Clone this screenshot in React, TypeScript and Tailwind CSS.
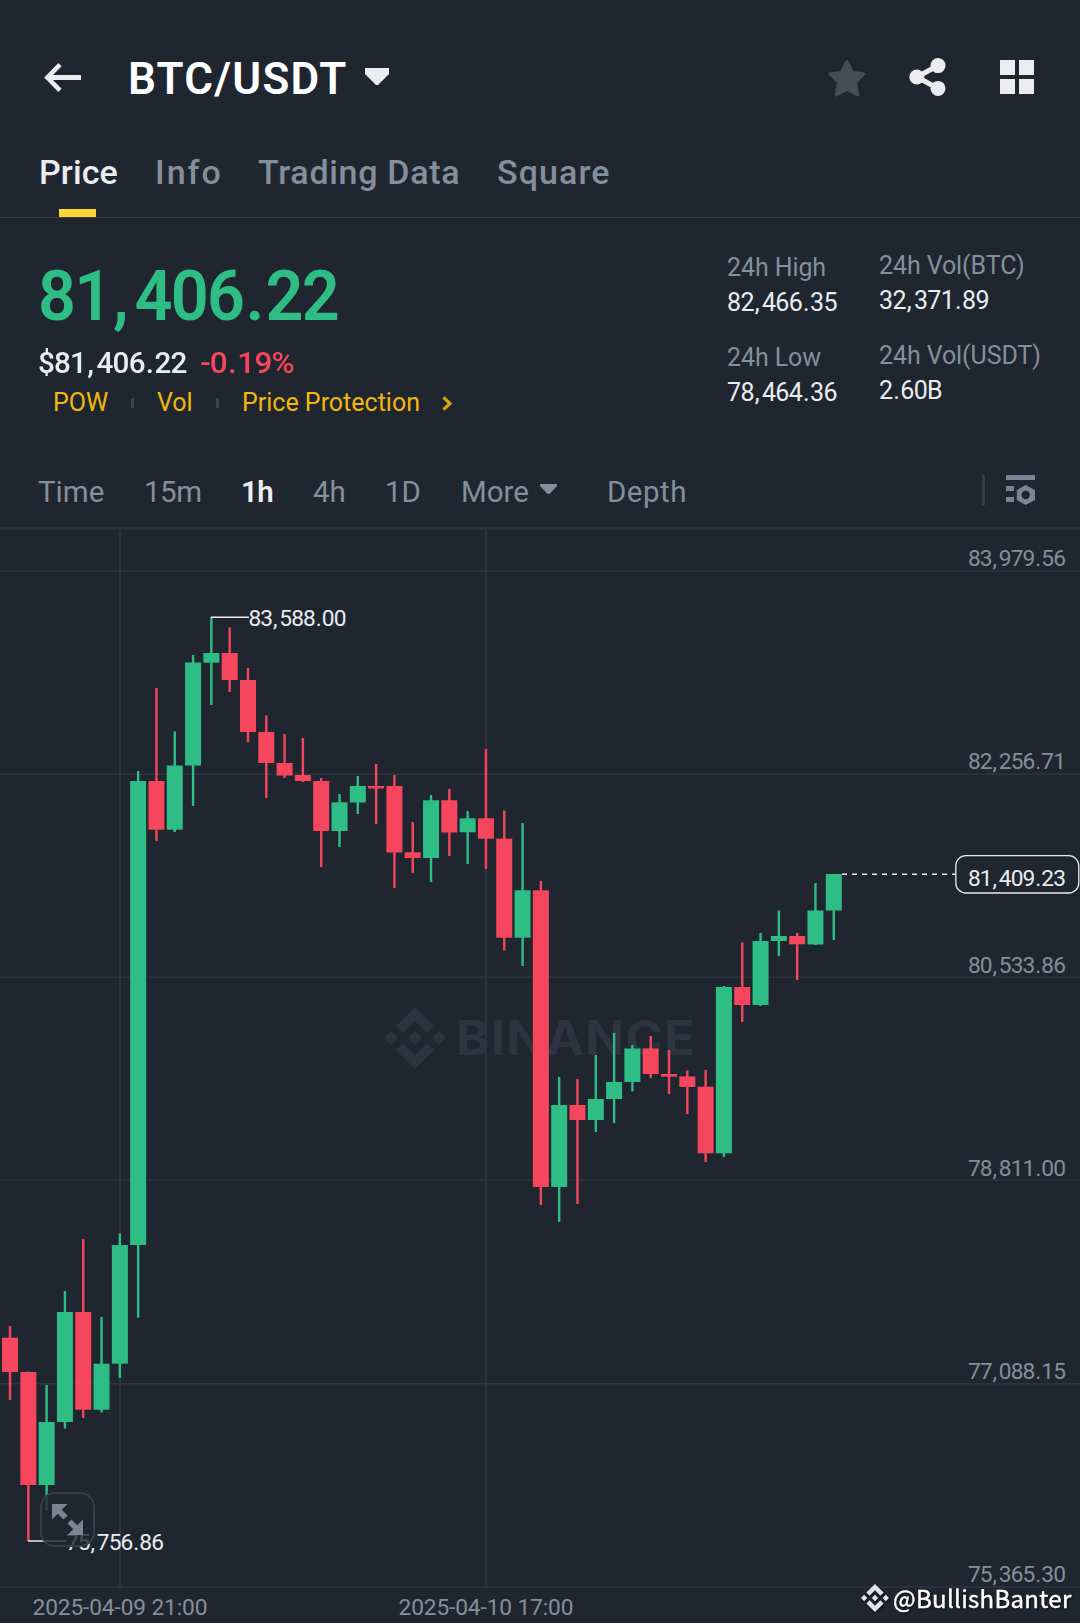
import React from "react";

type Candle = [up: 0 | 1, high: number, top: number, bottom: number, low: number];

const candles: Candle[] = [
  [0, 1326, 1337.7, 1372, 1400],
  [0, 1371.5, 1372, 1485, 1541],
  [1, 1385, 1422, 1485, 1511],
  [1, 1291, 1312, 1422, 1428.5],
  [0, 1239, 1312, 1409.7, 1418],
  [1, 1317, 1363.7, 1409.7, 1412.5],
  [1, 1233.5, 1245, 1363.7, 1378],
  [1, 771, 781, 1245, 1317.7],
  [0, 688, 781, 829.7, 841],
  [1, 731.5, 765.5, 829.7, 832],
  [1, 655, 662.5, 765.5, 806],
  [1, 617, 653, 662.7, 705],
  [0, 627.5, 653, 680, 692],
  [0, 668, 680, 732, 742],
  [0, 715.5, 732, 763, 798],
  [0, 734, 763, 775.5, 778],
  [0, 738, 775, 781, 782],
  [0, 778, 781, 831, 867],
  [1, 794, 802.3, 831, 847],
  [1, 776, 786, 802.5, 814],
  [0, 764, 786, 788.5, 824],
  [0, 775, 786, 852.5, 888],
  [0, 822, 852.3, 858, 873],
  [1, 795, 800.3, 858, 882],
  [0, 789, 800.3, 832.5, 856],
  [1, 811, 818.3, 832.3, 864],
  [0, 749, 818.3, 838.7, 869],
  [0, 810.5, 838.7, 937.7, 950.5],
  [1, 823, 890.3, 937.7, 966],
  [0, 881, 890.3, 1187, 1205],
  [1, 1077, 1105, 1187, 1222],
  [0, 1079, 1105, 1120, 1204],
  [1, 1055, 1099, 1120, 1132],
  [1, 1033, 1082, 1099, 1123],
  [1, 1045, 1048.5, 1082, 1091.5],
  [0, 1036, 1048.5, 1074, 1078],
  [0, 1050, 1074, 1076.7, 1094],
  [0, 1070.5, 1076.5, 1087, 1114],
  [0, 1070, 1086.7, 1153.3, 1162],
  [1, 986, 987, 1153.3, 1157],
  [0, 942.5, 987, 1005, 1022],
  [1, 933, 941, 1005, 1006],
  [1, 910.5, 936, 941, 956],
  [0, 933, 936, 944.3, 980],
  [1, 883, 910.5, 944.5, 945],
  [1, 874, 874, 910.5, 940],
];

const levels: [y: number, baseline: number, label: string][] = [
  [571.3, 566, "83,979.56"],
  [774.3, 769, "82,256.71"],
  [977.3, 973, "80,533.86"],
  [1180.3, 1176, "78,811.00"],
  [1383.7, 1379, "77,088.15"],
  [1587, 1582, "75,365.30"],
];

/* Figures set narrow, with roomy separators. */
function Num({ children }: { children: string }) {
  return (
    <span className="tracking-[-0.027em]">
      {children.split("").map((c, i) =>
        c === "," ? (
          <span key={i} className="ml-[0.04em] mr-[0.115em]">,</span>
        ) : c === "." ? (
          <span key={i} className="ml-[0.035em] mr-[0.045em]">.</span>
        ) : (
          c
        ),
      )}
    </span>
  );
}

function ChartNum({ x, y, fill, children }: { x: number; y: number; fill: string; children: string }) {
  const size = 22.7;
  const dx = children.split("").map((c, i) => {
    const prev = children[i - 1];
    let d = i === 0 ? 0 : -0.04;
    if (c === ",") d += 0.04;
    if (c === ".") d += 0.04;
    if (prev === ",") d += 0.115;
    if (prev === ".") d += 0.045;
    return (d * size).toFixed(2);
  });
  return (
    <text x={x} y={y} dx={dx.join(" ")} fontSize={size} fill={fill}>
      {children}
    </text>
  );
}

function Diamond({ className, fill }: { className: string; fill: string }) {
  return (
    <svg className={className} viewBox="0 0 62 62" fill={fill}>
      <path d="M31 0 50 19 43 26 31 14 19 26 12 19Z" />
      <path d="M31 62 50 43 43 36 31 48 19 36 12 43Z" />
      <path d="M31 24l7 7-7 7-7-7ZM7 24l7 7-7 7-7-7ZM55 24l7 7-7 7-7-7Z" />
    </svg>
  );
}

function Header() {
  return (
    <header className="flex h-[140px] items-start">
      <svg className="ml-11 mt-[63px] h-[29px] w-[37px]" viewBox="0 0 37 29" fill="none" stroke="#eaecef">
        <path d="M37 14.5H4" strokeWidth="5" />
        <path d="M16 1.7 3.4 14.5 16 27.3" strokeWidth="4.6" />
      </svg>
      <h1 className="ml-[47px] mt-[57px] w-[218px] whitespace-nowrap text-[44px] font-semibold leading-[44px] tracking-[1.25px] text-white">
        BTC/USDT
      </h1>
      <svg className="ml-[19px] mt-[68px] h-[17px] w-6" viewBox="0 0 24 17" fill="#eaecef">
        <path d="M0 0H24V6L13 17H11L0 6Z" />
      </svg>
      <div className="ml-auto mr-[46px] flex items-start">
        <svg className="mt-[59px] h-[38px] w-[38px]" viewBox="0 0 38 38" fill="#474d57" stroke="#474d57" strokeWidth="3" strokeLinejoin="round">
          <path d="M19 2.5 24.5 13.5 36 14.8 27.5 23.3 29.8 36 19 30.5 8.2 36 10.5 23.3 2 14.8 13.5 13.5Z" />
        </svg>
        <svg className="ml-[43px] mt-[58px] h-[38px] w-[37px]" viewBox="0 0 37 38" fill="#eaecef">
          <path d="M29 7.5 8 19 29 30.5" fill="none" stroke="#eaecef" strokeWidth="5" />
          <circle cx="29" cy="7.6" r="7.5" />
          <circle cx="7.8" cy="19" r="7.5" />
          <circle cx="29" cy="30.4" r="7.5" />
        </svg>
        <div className="ml-[54px] mt-[60px] grid grid-cols-2 gap-1">
          <i className="size-[15px] bg-[#eaecef]" />
          <i className="size-[15px] bg-[#eaecef]" />
          <i className="size-[15px] bg-[#eaecef]" />
          <i className="size-[15px] bg-[#eaecef]" />
        </div>
      </div>
    </header>
  );
}

function Tabs() {
  return (
    <nav className="flex h-[78px] items-start whitespace-nowrap border-b border-[#333b47] text-[34px] font-medium leading-[34px] text-[#848e9c]">
      <div className="ml-[38px] flex h-[77px] w-[117px] flex-col justify-between pt-[15px] text-[#eaecef]">
        <span className="ml-px tracking-[0.1px]">Price</span>
        <i className="ml-[21px] h-2 w-[37px] bg-[#fcd535]" />
      </div>
      <span className="w-[103px] pt-[15px] tracking-[2px]">Info</span>
      <span className="w-[239px] pt-[15px] tracking-[0.7px]">Trading Data</span>
      <span className="pt-[15px] tracking-[1.1px]">Square</span>
    </nav>
  );
}

function Stat({ label, value }: { label: string; value: string }) {
  return (
    <div className="h-[90px] whitespace-nowrap text-[25px] leading-[35px]">
      <div className="tracking-[-0.1px] text-[#848e9c]">{label}</div>
      <div className="text-[#eaecef]">
        <Num>{value}</Num>
      </div>
    </div>
  );
}

function Summary() {
  return (
    <section className="flex h-[232px] whitespace-nowrap">
      <div className="w-[727px]">
        <div className="ml-[38px] mt-[44px] w-[340px] origin-left scale-x-[0.957] text-[69.5px] font-semibold leading-[70px] text-[#2ebd85]">
          <Num>81,406.22</Num>
        </div>
        <div className="ml-[38px] mt-[16px] flex h-[30px] text-[30px] font-medium leading-[30px]">
          <span className="w-[162px] origin-left scale-x-[0.988] text-[#eaecef]">
            <Num>$81,406.22</Num>
          </span>
          <span className="origin-left scale-x-[1.05] text-[#f6465d]">
            <Num>-0.19%</Num>
          </span>
        </div>
        <div className="ml-[53px] mt-[12px] flex h-[26px] items-center text-[25px] leading-[26px] text-[#f0b90b]">
          <span className="w-[78px]">POW</span>
          <i className="h-[10px] w-[3px] bg-[#3b4350]" />
          <span className="ml-[23px] w-[59px]">Vol</span>
          <i className="h-[10px] w-[3px] bg-[#3b4350]" />
          <span className="ml-[23px] w-[200px]">Price Protection</span>
          <svg className="h-[15px] w-[11px]" viewBox="0 0 11 15" fill="none" stroke="#d6a50f" strokeWidth="3.2">
            <path d="M1.5 1.3 8 7.5 1.5 13.7" />
          </svg>
        </div>
      </div>
      <div className="w-[152px] pt-[32px]">
        <Stat label="24h High" value="82,466.35" />
        <Stat label="24h Low" value="78,464.36" />
      </div>
      <div className="pt-[30px]">
        <Stat label="24h Vol(BTC)" value="32,371.89" />
        <Stat label="24h Vol(USDT)" value="2.60B" />
      </div>
    </section>
  );
}

function Intervals() {
  return (
    <nav className="flex h-20 items-center whitespace-nowrap border-b-[3px] border-[#2b313c] pl-[38px] pt-[6px] text-[29.5px] leading-[30px] text-[#848e9c]">
      <span className="w-[106px]">Time</span>
      <span className="w-[97px] tracking-[-0.5px]">15m</span>
      <span className="w-[72px] font-semibold tracking-[-0.5px] text-[#eaecef]">1h</span>
      <span className="w-[72px]">4h</span>
      <span className="w-[76px]">1D</span>
      <span className="w-[79px]">More</span>
      <svg className="mb-[5px] h-[10px] w-[17px]" viewBox="0 0 17 10" fill="#848e9c">
        <path d="M0 0H17V2L9.5 10H7.5L0 2Z" />
      </svg>
      <span className="ml-[50px] tracking-[0.5px]">Depth</span>
      <i className="mb-[3px] ml-auto h-[30px] w-[3px] bg-[#363d49]" />
      <svg className="mb-[4px] ml-[21px] mr-[45px] h-[30px] w-[29px]" viewBox="0 0 29 30" fill="#7c8493">
        <path d="M0 0H29V5H0ZM0 11H8V16H0ZM0 22H8V27H0Z" />
        <path fillRule="evenodd" d="M19.7 10 29 15V25L19.7 30 10.8 25V15ZM19.7 15.8A4.2 4.2 0 1 0 19.7 24.2A4.2 4.2 0 1 0 19.7 15.8Z" />
      </svg>
    </nav>
  );
}

function Chart() {
  return (
    <section className="relative h-[1093px]">
      <svg className="block h-[1093px] w-[1080px]" viewBox="0 530 1080 1093">
        <g fill="#2d333f">
          <path d="M415 1007 434 1026 427 1033 415 1021 403 1033 396 1026Z" />
          <path d="M415 1069 434 1050 427 1043 415 1055 403 1043 396 1050Z" />
          <path d="M415 1031l7 7-7 7-7-7ZM391 1031l7 7-7 7-7-7ZM439 1031l7 7-7 7-7-7Z" />
          <text x="456" y="1055" fontSize="48" fontWeight="700" textLength="240" lengthAdjust="spacingAndGlyphs" className="font-[Inter,sans-serif] tracking-[1px]">
            BINANCE
          </text>
        </g>
        <g stroke="#2d3440">
          {levels.map(([y]) => (
            <path key={y} d={`M0 ${y}H1080`} strokeWidth="1.4" />
          ))}
          <path d="M120 530V1587M486 530V1587" strokeWidth="2" />
        </g>
        {candles.map(([up, high, top, bottom, low], i) => {
          const x = 10 + i * 18.306;
          const color = up ? "#2ebd85" : "#f6465d";
          return (
            <g key={i} fill={color}>
              <rect x={x - 1.2} y={high} width="2.4" height={low - high} />
              <rect x={x - 8} y={top} width="16" height={bottom - top} />
            </g>
          );
        })}
        <path d="M211 617.3H249M28 1541H66" stroke="#eaecef" strokeWidth="1.4" />
        <path d="M842 874.3H956" stroke="#eaecef" strokeWidth="1.4" strokeDasharray="5 5" />
        <rect x="955.8" y="855.7" width="123" height="37.3" rx="10" fill="#202630" stroke="#eaecef" strokeWidth="1.3" />
        {levels.map(([, baseline, label]) => (
          <ChartNum key={label} x={968} y={baseline} fill="#848e9c">
            {label}
          </ChartNum>
        ))}
        <ChartNum x={968} y={886} fill="#eaecef">81,409.23</ChartNum>
        <ChartNum x={248.5} y={626} fill="#eaecef">83,588.00</ChartNum>
        <ChartNum x={66} y={1549.5} fill="#eaecef">75,756.86</ChartNum>
        <text x="32.5" y="1615" fontSize="22.7" fill="#848e9c" textLength="175">
          2025-04-09 21:00
        </text>
        <text x="398.5" y="1615" fontSize="22.7" fill="#848e9c" textLength="175">
          2025-04-10 17:00
        </text>
      </svg>
      <button className="absolute left-10 top-[962px] size-[55px] rounded-[15px] border-2 border-[#363d49] bg-[#202630]/80">
        <svg className="absolute left-[10px] top-[10px] size-[31px]" viewBox="0 0 31 31" fill="#7c8493" stroke="#7c8493">
          <path stroke="none" d="M0 0H15.500L0 15.500ZM31 31H15.500L31 15.500Z" />
          <path d="M5 5 13.500 13.500M26 26 17.500 17.500" strokeWidth="5.6" />
        </svg>
      </button>
      <div className="absolute left-[861px] top-[1054px] flex h-7 items-center whitespace-nowrap text-white drop-shadow-[1px_1px_1px_rgba(0,0,0,0.6)]">
        <Diamond className="size-7" fill="#e2e4e7" />
        <span className="ml-[4px] font-['Noto_Sans_CJK_SC',sans-serif] text-[24px] font-normal leading-7 tracking-[0.3px] [-webkit-text-stroke:0.4px_white]">@BullishBanter</span>
      </div>
    </section>
  );
}

export default function App() {
  return (
    <main className="h-[1623px] w-[1080px] overflow-hidden bg-[#202630] font-[Roboto,sans-serif]">
      <Header />
      <Tabs />
      <Summary />
      <Intervals />
      <Chart />
    </main>
  );
}
